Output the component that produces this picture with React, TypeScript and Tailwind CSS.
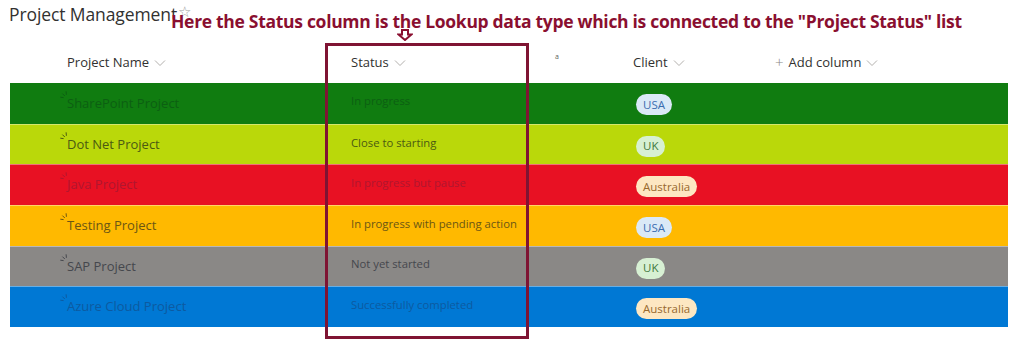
import React from 'react';

// 행 데이터
type Row = {
  name: string;
  status: string;
  client: 'USA' | 'UK' | 'Australia';
  bg: string;
  fg: string;
};

const rows: Row[] = [
  { name: 'SharePoint Project', status: 'In progress', client: 'USA', bg: 'bg-[#107c10]', fg: 'text-[#0c5f12]' },
  { name: 'Dot Net Project', status: 'Close to starting', client: 'UK', bg: 'bg-[#bad80a]', fg: 'text-[#4b5a12]' },
  { name: 'Java Project', status: 'In progress but pause', client: 'Australia', bg: 'bg-[#e81123]', fg: 'text-[#b0162f]' },
  { name: 'Testing Project', status: 'In progress with pending action', client: 'USA', bg: 'bg-[#ffb900]', fg: 'text-[#6b5614]' },
  { name: 'SAP Project', status: 'Not yet started', client: 'UK', bg: 'bg-[#8a8886]', fg: 'text-[#45474d]' },
  { name: 'Azure Cloud Project', status: 'Successfully completed', client: 'Australia', bg: 'bg-[#0078d4]', fg: 'text-[#0d5aa0]' },
];

const pillStyle: Record<Row['client'], string> = {
  USA: 'bg-[#dae9f7] text-[#3a6db0]',
  UK: 'bg-[#d7f0d3] text-[#42793d]',
  Australia: 'bg-[#fde7c2] text-[#98692e]',
};

const Chevron = () => (
  <svg width="12" height="8" viewBox="0 0 12 8" className="ml-[5px] mt-[1px]" fill="none">
    <path d="M1 1.5 L6 6.5 L11 1.5" stroke="#b3b0ad" strokeWidth="1" />
  </svg>
);

// 새 항목 표시 아이콘
const Sparkle = ({ color }: { color: string }) => (
  <svg width="8" height="8" viewBox="0 0 8 8" fill="none" className={color}>
    <path d="M0.3 6.2 L3.6 6.6 M2.4 2.6 L4.8 5 M6.1 0.3 L6.4 3.8" stroke="currentColor" strokeWidth="1" />
  </svg>
);

export default function App() {
  return (
    <div className="relative w-[1023px] h-[357px] bg-white overflow-hidden font-['Open_Sans',sans-serif]">
      {/* 제목 */}
      <div className="flex items-start pl-[9px] pt-[3px] h-[42px]">
        <h1 className="text-[17.5px] leading-[22px] text-[#323130] tracking-[-0.1px]">Project Management</h1>
        <span className="ml-[1px] mt-[1px] text-[15px] leading-[15px] text-[#a19f9d]">☆</span>
      </div>

      {/* 헤더 */}
      <div className="flex items-center h-[41px] text-[13px] text-[#323130]">
        <div className="w-[67px]" />
        <div className="w-[284px] flex items-center">
          Project Name
          <Chevron />
        </div>
        <div className="w-[204px] flex items-center">
          Status
          <Chevron />
        </div>
        <div className="w-[78px] -mt-[10px] text-[7px] text-[#605e5c]">a</div>
        <div className="w-[142px] flex items-center">
          Client
          <Chevron />
        </div>
        <div className="flex items-center">
          <span className="text-[#8a8886] mr-[5px] text-[15px] font-light">+</span>
          Add column
          <Chevron />
        </div>
      </div>

      {/* 목록 */}
      <div className="ml-[10px] w-[998px] flex flex-col">
        {rows.map((r, i) => (
          <div
            key={r.name}
            className={`relative flex items-center h-[40.67px] ${r.bg} ${i > 0 ? 'border-t border-white/40' : ''}`}
          >
            <div className="w-[57px]" />
            <div className={`relative w-[284px] text-[13px] ${r.fg}`}>
              <span className="absolute -left-[7px] -top-[3px]">
                <Sparkle color={r.fg} />
              </span>
              <span>{r.name}</span>
            </div>
            <div className={`w-[282px] text-[11.3px] -mt-[3px] ${r.fg}`}>{r.status}</div>
            <div className="flex-1">
              <span
                className={`ml-[3px] inline-flex items-center h-[21px] px-[7px] rounded-full text-[11.5px] ${pillStyle[r.client]}`}
              >
                {r.client}
              </span>
            </div>
          </div>
        ))}
      </div>

      {/* 주석 */}
      <div className="absolute left-[171px] top-[10px] text-[17.5px] leading-[22px] font-bold text-[#8a0f30] whitespace-nowrap tracking-[-0.3px]">
        Here the Status column is the Lookup data type which is connected to the "Project Status" list
      </div>
      <svg className="absolute left-[397px] top-[29px]" width="16" height="12" viewBox="0 0 16 12" fill="none">
        <path d="M5 1 H11 V5.5 H14.5 L8 11 L1.5 5.5 H5 Z" stroke="#8a0f30" strokeWidth="2" strokeLinejoin="miter" />
      </svg>
      <div className="absolute left-[325px] top-[43px] w-[204px] h-[296px] border-[3px] border-[#7f1433]" />
    </div>
  );
}
